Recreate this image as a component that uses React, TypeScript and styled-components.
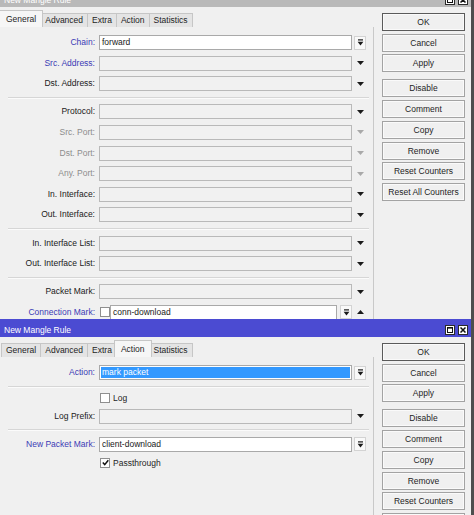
import styled, { createGlobalStyle } from 'styled-components'

const GlobalStyle = createGlobalStyle`
  html, body {
    margin: 0;
    padding: 0;
  }
  body {
    background: #ffffff;
    font-family: "Liberation Sans", Arial, sans-serif;
    font-size: 8.5px;
    color: #1e1e1e;
  }
  * {
    box-sizing: border-box;
  }
`

type Tone = 'blue' | 'dark' | 'muted'
type Fill = 'white' | 'empty' | 'selected'
type SlotKind = 'combo' | 'down' | 'downMuted' | 'up' | 'none'

const toneColor: Record<Tone, string> = {
  blue: '#3b3bb5',
  dark: '#202020',
  muted: '#8c8c8c',
}

const Desktop = styled.div`
  position: relative;
  width: 474px;
  height: 515px;
  overflow: hidden;
  background: #f4f4f4;
`

// windows sit on a free desktop, so they are placed by offset
const WindowFrame = styled.div<{ $top: number }>`
  position: absolute;
  left: 0;
  top: ${p => p.$top}px;
  width: 474px;
  background: #f0f0f0;
  border-right: 3px solid #4e4e4e;
`

const TitleBar = styled.div<{ $active: boolean }>`
  height: 18px;
  display: flex;
  align-items: center;
  padding: 3px 3px 0 4px;
  background: ${p => (p.$active ? '#4b4bd2' : '#b9b9b9')};
  color: #ffffff;
`

const TitleText = styled.span`
  flex: 1;
  white-space: nowrap;
`

const TitleButtons = styled.div`
  display: flex;
  gap: 3px;
`

const TitleButton = styled.div`
  width: 10px;
  height: 10px;
  background: #ffffff;
  border: 1px solid #2a2a2a;
  display: flex;
  align-items: center;
  justify-content: center;
`

const Body = styled.div`
  display: flex;
`

const Main = styled.div`
  width: 374px;
  display: flex;
  flex-direction: column;
`

const TabStrip = styled.div`
  height: 20px;
  display: flex;
  align-items: flex-end;
  padding-left: 2px;
`

const Tab = styled.div<{ $selected?: boolean }>`
  position: relative;
  z-index: ${p => (p.$selected ? 1 : 0)};
  height: ${p => (p.$selected ? 17 : 14)}px;
  padding: ${p => (p.$selected ? '1.5px 6px 0' : '0 4px')};
  margin-left: ${p => (p.$selected ? -3 : -1)}px;
  margin-right: ${p => (p.$selected ? -2 : 0)}px;
  border: 1px solid #c6c6c6;
  border-bottom: none;
  background: ${p => (p.$selected ? '#f6f6f6' : '#e4e4e4')};
  line-height: 13px;
  white-space: nowrap;
  color: #1e1e1e;
`

const Form = styled.div<{ $tail: number }>`
  flex: 1;
  display: flex;
  flex-direction: column;
  gap: 5.6px;
  padding: 8px 0 ${p => p.$tail}px;
  border-right: 1px solid #c9c9c9;
`

const Separator = styled.div`
  height: 2px;
  margin: 0 4px 0 8px;
  border-top: 1px solid #d6d6d6;
  border-bottom: 1px solid #fbfbfb;
`

const Row = styled.div`
  height: 15px;
  display: flex;
  align-items: center;
`

const Label = styled.div<{ $tone: Tone }>`
  width: 99px;
  padding-right: 4px;
  text-align: right;
  line-height: 15px;
  white-space: nowrap;
  color: ${p => toneColor[p.$tone]};
`

const Field = styled.div<{ $fill: Fill }>`
  flex: 1;
  height: 15px;
  padding-left: 2px;
  line-height: 13px;
  white-space: nowrap;
  border: 1px solid ${p => (p.$fill === 'empty' ? '#b9b9b9' : '#a9a9a9')};
  background: ${p =>
    p.$fill === 'white' ? '#ffffff' : p.$fill === 'selected' ? '#3399ff' : '#f1f1f1'};
  color: ${p => (p.$fill === 'selected' ? '#ffffff' : '#1a1a1a')};
  box-shadow: ${p => (p.$fill === 'selected' ? 'inset 0 0 0 1px #ffffff' : 'none')};
`

const Slot = styled.div`
  width: 21px;
  height: 15px;
  padding-left: 2px;
  display: flex;
  align-items: center;
`

const ComboButton = styled.div<{ $inline?: boolean }>`
  width: 12px;
  height: 14px;
  margin-left: ${p => (p.$inline ? 3 : 0)}px;
  border: 1px solid #d3d3d3;
  background: #f9f9f9;
  display: flex;
  align-items: center;
  justify-content: center;
`

const ArrowBox = styled.div`
  width: 12px;
  display: flex;
  justify-content: center;
`

const CheckRow = styled.div`
  height: 10px;
  padding-left: 100px;
  display: flex;
  align-items: center;
  gap: 3px;
`

const Check = styled.div<{ $inRow?: boolean }>`
  width: 10px;
  height: 10px;
  margin-left: ${p => (p.$inRow ? 1 : 0)}px;
  border: 1px solid #8f8f8f;
  background: #ffffff;
  display: flex;
  align-items: center;
  justify-content: center;
`

const CheckText = styled.span`
  line-height: 10px;
  color: #1e1e1e;
`

const Sidebar = styled.div`
  display: flex;
  flex-direction: column;
  gap: 2.7px;
  padding: 6px 0 0 8px;
`

const Button = styled.div<{ $primary?: boolean; $spaced?: boolean }>`
  width: 83px;
  height: 18px;
  margin-top: ${p => (p.$spaced ? 4.4 : 0)}px;
  border: 1px solid ${p => (p.$primary ? '#5a5a5a' : '#a3a3a3')};
  box-shadow: inset 0 0 0 1px #fafafa;
  background: #f0f0f0;
  text-align: center;
  line-height: 16px;
  white-space: nowrap;
  color: #1e1e1e;
`

const ComboGlyph = () => (
  <svg width="7" height="7" viewBox="0 0 7 7">
    <rect x="1" y="0.3" width="5" height="1.2" fill="#1a1a1a" />
    <path d="M0.6 2.8 H6.4 L3.5 6.4 Z" fill="#1a1a1a" />
  </svg>
)

const Arrow = ({ up, color }: { up?: boolean; color: string }) => (
  <svg width="7" height="4" viewBox="0 0 7 4">
    <path d={up ? 'M0 4 H7 L3.5 0 Z' : 'M0 0 H7 L3.5 4 Z'} fill={color} />
  </svg>
)

const SlotContent = ({ kind }: { kind: SlotKind }) => {
  if (kind === 'combo')
    return (
      <ComboButton>
        <ComboGlyph />
      </ComboButton>
    )
  if (kind === 'none') return null
  return (
    <ArrowBox>
      <Arrow up={kind === 'up'} color={kind === 'downMuted' ? '#a9a9a9' : '#1a1a1a'} />
    </ArrowBox>
  )
}

const FieldRow = ({
  label,
  tone = 'dark',
  fill = 'empty',
  value,
  slot = 'down',
}: {
  label: string
  tone?: Tone
  fill?: Fill
  value?: string
  slot?: SlotKind
}) => (
  <Row>
    <Label $tone={tone}>{label}</Label>
    <Field $fill={fill}>{value}</Field>
    <Slot>
      <SlotContent kind={slot} />
    </Slot>
  </Row>
)

const CheckMark = () => (
  <svg width="7" height="7" viewBox="0 0 7 7">
    <path d="M0.8 3.6 L2.7 5.6 L6.3 1.2" stroke="#111" strokeWidth="1.5" fill="none" />
  </svg>
)

const CheckField = ({ text, checked }: { text: string; checked?: boolean }) => (
  <CheckRow>
    <Check>{checked && <CheckMark />}</Check>
    <CheckText>{text}</CheckText>
  </CheckRow>
)

const tabs = ['General', 'Advanced', 'Extra', 'Action', 'Statistics']
const actions = [
  'OK',
  'Cancel',
  'Apply',
  'Disable',
  'Comment',
  'Copy',
  'Remove',
  'Reset Counters',
  'Reset All Counters',
]

const RuleWindow = ({
  top,
  active,
  selectedTab,
  tail,
  children,
}: {
  top: number
  active: boolean
  selectedTab: string
  tail: number
  children: React.ReactNode
}) => (
  <WindowFrame $top={top}>
    <TitleBar $active={active}>
      <TitleText>New Mangle Rule</TitleText>
      <TitleButtons>
        <TitleButton>
          <svg width="6" height="6" viewBox="0 0 6 6">
            <rect x="0.5" y="0.5" width="5" height="5" fill="none" stroke="#111" />
            <rect x="0" y="0" width="6" height="1.6" fill="#111" />
          </svg>
        </TitleButton>
        <TitleButton>
          <svg width="6" height="6" viewBox="0 0 6 6">
            <path d="M0.5 0.5 L5.5 5.5 M5.5 0.5 L0.5 5.5" stroke="#111" strokeWidth="1.5" />
          </svg>
        </TitleButton>
      </TitleButtons>
    </TitleBar>
    <Body>
      <Main>
        <TabStrip>
          {tabs.map(t => (
            <Tab key={t} $selected={t === selectedTab}>
              {t}
            </Tab>
          ))}
        </TabStrip>
        <Form $tail={tail}>{children}</Form>
      </Main>
      <Sidebar>
        {actions.map(a => (
          <Button key={a} $primary={a === 'OK'} $spaced={a === 'Disable'}>
            {a}
          </Button>
        ))}
      </Sidebar>
    </Body>
  </WindowFrame>
)

export default function App() {
  return (
    <>
      <GlobalStyle />
      <Desktop>
        <RuleWindow top={-11} active={false} selectedTab="General" tail={40}>
          <FieldRow label="Chain:" tone="blue" fill="white" value="forward" slot="combo" />
          <FieldRow label="Src. Address:" tone="blue" />
          <FieldRow label="Dst. Address:" />
          <Separator />
          <FieldRow label="Protocol:" />
          <FieldRow label="Src. Port:" tone="muted" slot="downMuted" />
          <FieldRow label="Dst. Port:" tone="muted" slot="downMuted" />
          <FieldRow label="Any. Port:" tone="muted" slot="downMuted" />
          <FieldRow label="In. Interface:" />
          <FieldRow label="Out. Interface:" />
          <Separator />
          <FieldRow label="In. Interface List:" />
          <FieldRow label="Out. Interface List:" />
          <Separator />
          <FieldRow label="Packet Mark:" />
          <Row>
            <Label $tone="blue">Connection Mark:</Label>
            <Check $inRow />
            <Field $fill="white">conn-download</Field>
            <ComboButton $inline>
              <ComboGlyph />
            </ComboButton>
            <Slot>
              <SlotContent kind="up" />
            </Slot>
          </Row>
        </RuleWindow>

        <RuleWindow top={319} active selectedTab="Action" tail={80}>
          <FieldRow label="Action:" tone="blue" fill="selected" value="mark packet" slot="combo" />
          <Separator />
          <CheckField text="Log" />
          <FieldRow label="Log Prefix:" />
          <Separator />
          <FieldRow
            label="New Packet Mark:"
            tone="blue"
            fill="white"
            value="client-download"
            slot="combo"
          />
          <CheckField text="Passthrough" checked />
        </RuleWindow>
      </Desktop>
    </>
  )
}
